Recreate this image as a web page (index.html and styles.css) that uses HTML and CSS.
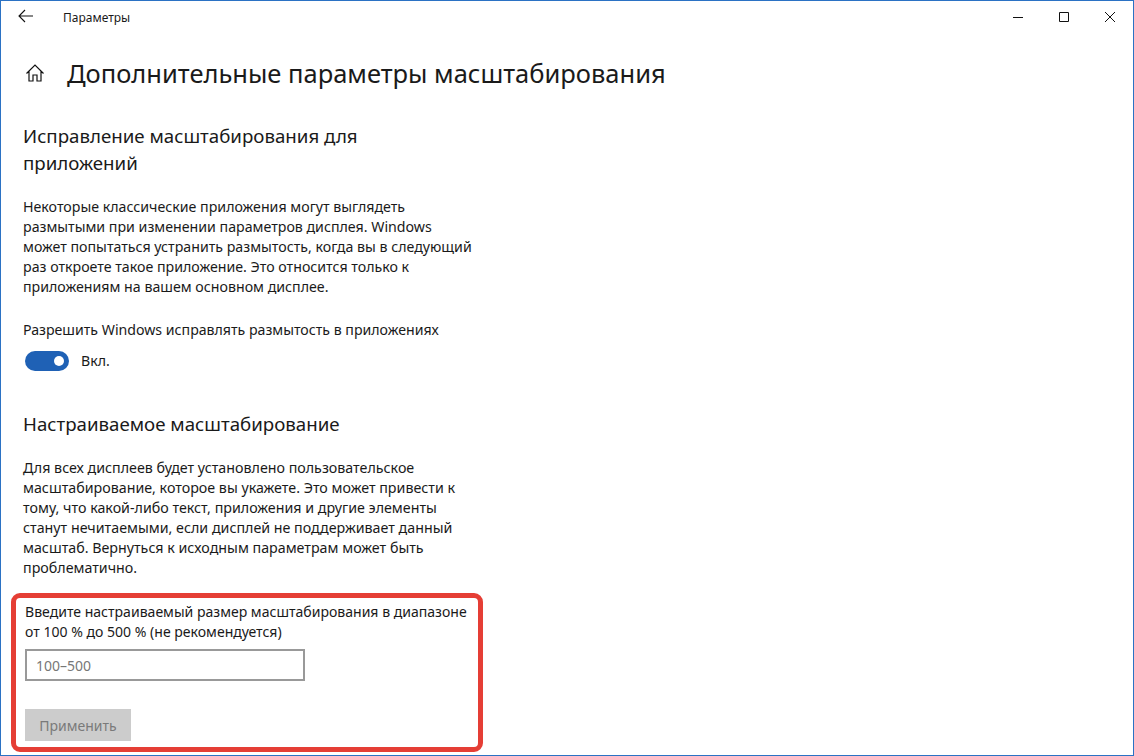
FILE: index.html
```
<!DOCTYPE html>
<html lang="ru">
<head>
<meta charset="utf-8">
<title>Параметры</title>
<link rel="stylesheet" href="styles.css">
</head>
<body>
<div class="window">
  <header class="titlebar">
    <div class="title-left">
      <svg class="back" width="16" height="14" viewBox="0 0 16 14"><path d="M7 1 1 7l6 6M1 7h14" fill="none" stroke="#111" stroke-width="1.1"/></svg>
      <span class="app-name">Параметры</span>
    </div>
    <div class="controls">
      <svg width="12" height="12" viewBox="0 0 12 12"><path d="M1 6.5h10" stroke="#111" fill="none"/></svg>
      <svg width="12" height="12" viewBox="0 0 12 12"><path d="M1.500 1.500h9v9h-9z" stroke="#111" fill="none"/></svg>
      <svg width="12" height="12" viewBox="0 0 12 12"><path d="M1 1l10 10M11 1 1 11" stroke="#111" fill="none"/></svg>
    </div>
  </header>
  <div class="page-head">
    <svg class="home" width="20" height="20" viewBox="0 0 20 20"><path d="M1.500 10.500 10 2l8.500 8.500M4 8.500V18h4v-6h4v6h4V8.500" fill="none" stroke="#111" stroke-width="1.200"/></svg>
    <h1>Дополнительные параметры масштабирования</h1>
  </div>
  <main class="content">
    <h2 class="first">Исправление масштабирования для<br>приложений</h2>
    <p class="text intro">Некоторые классические приложения могут выглядеть<br>размытыми при изменении параметров дисплея. Windows<br>может попытаться устранить размытость, когда вы в следующий<br>раз откроете такое приложение. Это относится только к<br>приложениям на вашем основном дисплее.</p>
    <p class="text label">Разрешить Windows исправлять размытость в приложениях</p>
    <div class="toggle-row">
      <span class="toggle"><span class="knob"></span></span>
      <span class="text">Вкл.</span>
    </div>
    <h2 class="second">Настраиваемое масштабирование</h2>
    <p class="text desc">Для всех дисплеев будет установлено пользовательское<br>масштабирование, которое вы укажете. Это может привести к<br>тому, что какой-либо текст, приложения и другие элементы<br>станут нечитаемыми, если дисплей не поддерживает данный<br>масштаб. Вернуться к исходным параметрам может быть<br>проблематично.</p>
    <section class="callout">
      <p class="text hint">Введите настраиваемый размер масштабирования в диапазоне<br>от 100 % до 500 % (не рекомендуется)</p>
      <input class="field" type="text" placeholder="100–500">
      <button class="apply" type="button" disabled>Применить</button>
    </section>
  </main>
</div>
</body>
</html>
```
FILE: styles.css
```
* { box-sizing: border-box; }
html, body { margin: 0; padding: 0; }
body { background: #fff; font-family: "Noto Sans", "Open Sans", sans-serif; color: #1a1a1a; }
.window { width: 1134px; height: 756px; border: 1px solid #2b72c4; overflow: hidden; }
.titlebar { display: flex; justify-content: space-between; height: 32px; }
.title-left { display: flex; align-items: center; padding-left: 17px; }
.back { margin-top: -2px; }
.app-name { font-size: 12px; margin-left: 29px; }
.controls { display: flex; align-items: center; gap: 34px; padding-right: 17px; }
.page-head { display: flex; align-items: center; height: 44px; margin-top: 18px; padding-left: 24px; }
.home { flex: none; }
h1 { margin: 0 0 0 22px; font-size: 25.5px; font-weight: 400; line-height: 36px; white-space: nowrap; }
.content { padding-left: 22px; }
h2 { margin: 0; font-size: 18.7px; font-weight: 400; line-height: 28px; }
h2.first { margin-top: 27px; line-height: 27px; }
h2.second { margin-top: 39px; }
.text { margin: 0; font-size: 14.1px; line-height: 20px; white-space: nowrap; }
.content > .intro { margin-top: 21px; font-size: 14.2px; }
.content > .label { margin-top: 23px; font-size: 14.15px; }
.content > .desc { margin-top: 20px; font-size: 14.25px; }
.hint { font-size: 14.05px; }
.toggle-row { display: flex; align-items: center; gap: 12px; margin-top: 11px; padding-left: 2px; }
.toggle { display: flex; align-items: center; justify-content: flex-end; width: 44px; height: 20px; padding-right: 5px; border-radius: 10px; background: #1f61b5; }
.knob { width: 10px; height: 10px; border-radius: 50%; background: #fff; }
.callout { width: 472px; height: 159px; margin: 15px 0 0 -12px; padding: 4px 0 0 9px; border: 5px solid #e53e35; border-radius: 9px; }
.field { display: block; width: 280px; height: 32px; margin-top: 7px; padding: 0 10px 0 9px; border: 2px solid #999; background: #fff; font: 14px "Noto Sans", sans-serif; outline: none; }
.field::placeholder { color: #777; opacity: 1; }
.apply { display: block; width: 106px; height: 32px; margin-top: 28px; padding: 0; border: 0; background: #ccc; color: #7a7a7a; font: 14px "Noto Sans", sans-serif; }
```
